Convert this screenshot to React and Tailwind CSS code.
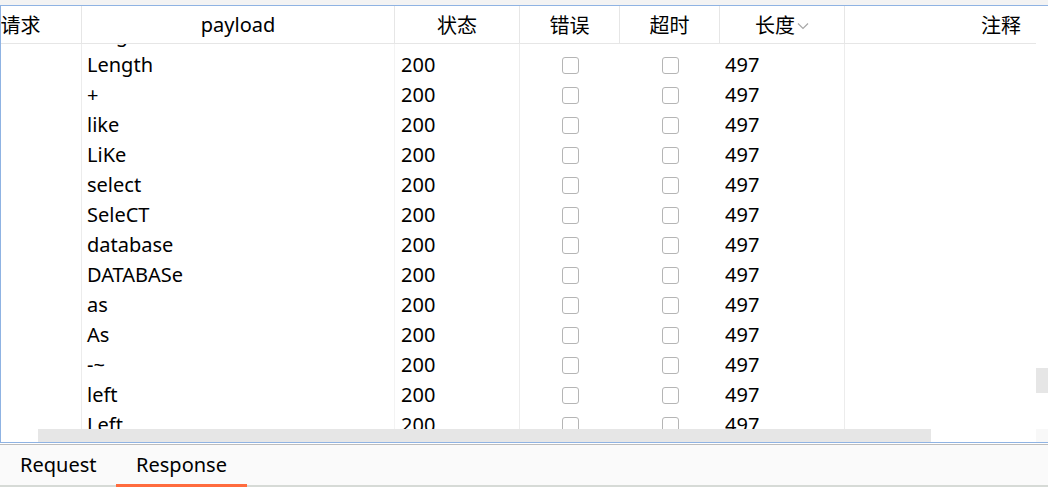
import React from 'react';

const rows = [
  'length', 'Length', '+', 'like', 'LiKe', 'select', 'SeleCT', 'database',
  'DATABASe', 'as', 'As', '-~', 'left', 'Left',
];

const Checkbox = () => (
  <span className="block w-[17px] h-[17px] rounded-[3px] border border-[#b5b5b5] bg-white" />
);

const HeaderCell = ({ className = '', children }) => (
  <div className={`h-full flex items-center justify-center border-r border-[#e6e6e6] ${className}`}>
    {children}
  </div>
);

const Row = ({ payload }) => (
  <div className="flex h-[30px] items-center">
    <div className="w-[122px] h-full shrink-0 border-r border-[#ececec]" />
    <div className="w-[313px] h-full shrink-0 pl-[5px] flex items-center border-r border-[#f3f3f3]">{payload}</div>
    <div className="w-[125px] h-full shrink-0 pl-[6px] flex items-center border-r border-[#ececec]">200</div>
    <div className="w-[100px] h-full shrink-0 flex items-center justify-center"><Checkbox /></div>
    <div className="w-[100px] h-full shrink-0 flex items-center justify-center"><Checkbox /></div>
    <div className="w-[125px] h-full shrink-0 pl-[5px] flex items-center border-r border-[#ececec]">497</div>
    <div className="w-[312px] h-full shrink-0" />
  </div>
);

const App = () => {
  return (
    <div className="w-[1048px] h-[487px] bg-white flex flex-col overflow-hidden text-[20px] text-black font-['Noto_Sans','Noto_Sans_CJK_SC',sans-serif]">
      <div className="h-[5px] shrink-0 bg-[#f3f3f3]" />

      {/* table panel */}
      <div className="h-[438px] shrink-0 flex flex-col border-t border-l border-b border-[#8fb3e3]">
        <div className="flex flex-1 min-h-0">
          <div className="w-[1035px] overflow-hidden flex flex-col">
            <div className="h-[38px] shrink-0 border-b border-[#e6e6e6] flex -ml-[41px]">
              <HeaderCell className="w-[122px] shrink-0 font-['Noto_Sans_CJK_SC',sans-serif]">请求</HeaderCell>
              <HeaderCell className="w-[313px] shrink-0">payload</HeaderCell>
              <HeaderCell className="w-[125px] shrink-0 font-['Noto_Sans_CJK_SC',sans-serif]">状态</HeaderCell>
              <HeaderCell className="w-[100px] shrink-0 font-['Noto_Sans_CJK_SC',sans-serif]">错误</HeaderCell>
              <HeaderCell className="w-[100px] shrink-0 font-['Noto_Sans_CJK_SC',sans-serif]">超时</HeaderCell>
              <HeaderCell className="w-[125px] shrink-0 font-['Noto_Sans_CJK_SC',sans-serif]">
                <span>长度</span>
                <svg width="12" height="8" viewBox="0 0 12 8" className="ml-[2px] mt-[2px]">
                  <path d="M1 1.5 L6 6.5 L11 1.5" fill="none" stroke="#a8a8a8" strokeWidth="1.2" />
                </svg>
              </HeaderCell>
              <div className="w-[312px] shrink-0 h-full flex items-center justify-center font-['Noto_Sans_CJK_SC',sans-serif]">注释</div>
            </div>
            <div className="flex-1 overflow-hidden">
              <div className="-mt-[24px] -ml-[41px]">
                {rows.map((r, i) => (
                  <Row key={i} payload={r} />
                ))}
              </div>
            </div>
          </div>
          <div className="w-[12px] flex flex-col bg-white">
            <div className="h-[362px]" />
            <div className="h-[25px] bg-[#e6e6e6]" />
          </div>
        </div>
        <div className="h-[13px] shrink-0 flex">
          <div className="w-[1035px] flex">
            <div className="w-[37px]" />
            <div className="w-[893px] bg-[#e6e6e6]" />
          </div>
          <div className="w-[12px] bg-[#f8f8f8]" />
        </div>
      </div>

      <div className="h-[1px] shrink-0 bg-white" />
      <div className="h-[1px] shrink-0 bg-[#bdbdbd]" />

      {/* tabs */}
      <div className="flex-1 bg-[#fafafa] border-b-2 border-[#d6dad6] flex items-stretch">
        <div className="w-[116px] flex items-center pl-[20px]">Request</div>
        <div className="w-[131px] flex items-center justify-center relative">
          <span className="-mt-[1px]">Response</span>
          <span className="absolute left-0 right-0 -bottom-[2px] h-[3px] bg-[#ff6b3d]" />
        </div>
      </div>
    </div>
  );
};

export default App;
